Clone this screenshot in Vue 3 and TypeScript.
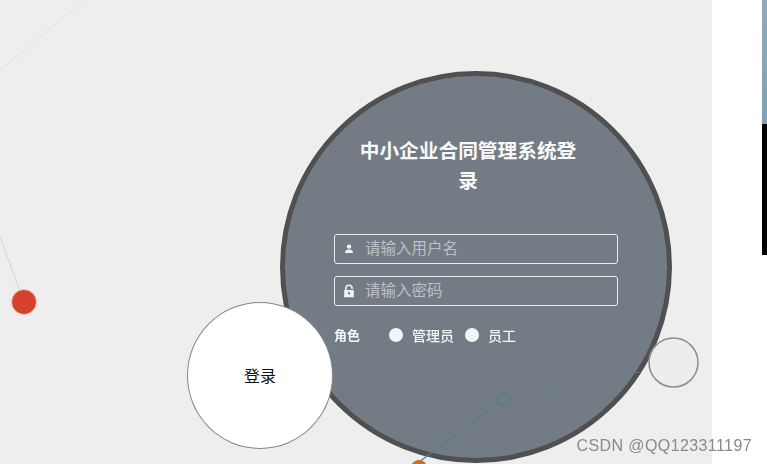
<script setup lang="ts">
import { ref } from 'vue'

const username = ref('')
const password = ref('')
const role = ref('')
const roles = ['管理员', '员工']
</script>

<template>
  <div class="page">
    <main class="stage">
      <svg class="threads" width="712" height="464" viewBox="0 0 712 464" aria-hidden="true">
        <line x1="0" y1="70" x2="85" y2="0" stroke="#e3e0df" stroke-width="1" />
        <line x1="0" y1="236" x2="20" y2="292" stroke="#e0cfcc" stroke-width="1" />
        <circle cx="24" cy="302" r="12.5" fill="#d5412d" stroke="#f3c9bf" stroke-width="1" />
      </svg>

      <section class="disc">
        <h1 class="title">中小企业合同管理系统登录</h1>
        <label class="field">
          <svg class="icon" width="14" height="14" viewBox="0 0 14 14" aria-hidden="true">
            <circle cx="7" cy="4.6" r="2.2" fill="#f2f4f5" />
            <path d="M3 11 C3 8.3 4.8 7.6 7 7.6 C9.2 7.6 11 8.3 11 11 Z" fill="#f2f4f5" />
          </svg>
          <input v-model="username" class="input" type="text" placeholder="请输入用户名" />
        </label>
        <label class="field">
          <svg class="icon" width="14" height="14" viewBox="0 0 14 14" aria-hidden="true">
            <path d="M3.900 6.500 V4.300 C3.900 2.500 5.300 1.300 7 1.300 C8.700 1.300 10.100 2.500 10.100 4.300 V4.900" fill="none" stroke="#f2f4f5" stroke-width="1.600" />
            <path fill-rule="evenodd" d="M2.200 6 H11.800 V13.200 H2.200 Z M7 8 A1.200 1.200 0 1 0 7 10.400 A1.200 1.200 0 1 0 7 8 Z" fill="#f2f4f5" />
          </svg>
          <input v-model="password" class="input" type="password" placeholder="请输入密码" />
        </label>
        <div class="roles">
          <span class="roles-label">角色</span>
          <label v-for="item in roles" :key="item" class="role">
            <input v-model="role" class="radio" type="radio" name="role" :value="item" />
            <span>{{ item }}</span>
          </label>
        </div>
      </section>

      <svg class="threads threads-top" width="712" height="464" viewBox="0 0 712 464" aria-hidden="true">
        <line x1="415" y1="465" x2="498" y2="403" stroke="#4f7f92" stroke-width="1.300" />
        <line x1="510" y1="398" x2="640" y2="372" stroke="#5f7a8a" stroke-width="1" />
        <circle cx="503.500" cy="399.500" r="6" fill="none" stroke="#4f7f92" stroke-width="1.500" />
        <circle cx="673.500" cy="362.500" r="24.500" fill="#eeeded" stroke="#8f8f8f" stroke-width="1.600" />
        <circle cx="419" cy="468" r="8" fill="#c8701f" />
      </svg>

      <button class="login" type="button">登录</button>
    </main>
    <div class="gutter">
      <div class="strip">
        <div class="strip-blue"></div>
        <div class="strip-black"></div>
      </div>
    </div>
    <span class="mark">CSDN @QQ123311197</span>
  </div>
</template>

<style scoped>
.page {
  position: relative;
  display: flex;
  width: 767px;
  height: 464px;
  overflow: hidden;
  background: #fff;
  font-family: "Noto Sans CJK SC", "Liberation Sans", sans-serif;
}
.stage {
  position: relative;
  flex: 0 0 712px;
  height: 464px;
  overflow: hidden;
  background: #eeeeee;
}
.threads {
  position: absolute;
  left: 0;
  top: 0;
  pointer-events: none;
}
.threads-top {
  z-index: 2;
}
.disc {
  position: absolute;
  left: 280px;
  top: 71px;
  box-sizing: border-box;
  width: 392px;
  height: 392px;
  padding: 59px 49px 0;
  display: flex;
  flex-direction: column;
  border: 5px solid #505050;
  border-radius: 50%;
  background: #737c85;
  color: #fff;
  filter: blur(0.3px);
}
.title {
  width: 234px;
  margin: 0 0 39px 17px;
  font-size: 19.700px;
  line-height: 30px;
  font-weight: 700;
  text-align: center;
  color: #f8f9fa;
}
.field {
  box-sizing: border-box;
  display: flex;
  align-items: center;
  width: 284px;
  height: 30px;
  margin-bottom: 12px;
  padding-left: 7px;
  border: 1.500px solid #e8ecef;
  border-radius: 3px;
}
.icon {
  flex: none;
}
.input {
  flex: 1;
  min-width: 0;
  margin-left: 9px;
  padding: 0 0 4px;
  border: 0;
  outline: 0;
  background: transparent;
  font: 400 15.500px "Noto Sans CJK SC", sans-serif;
  color: #fff;
}
.input::placeholder {
  color: #bcc1c7;
  opacity: 1;
}
.roles {
  display: flex;
  align-items: center;
  height: 26px;
  margin-top: 4px;
  font-size: 14px;
  font-weight: 500;
  color: #f4f6f7;
}
.roles-label {
  width: 55px;
  font-size: 13px;
  font-weight: 700;
  position: relative;
  top: -1px;
}
.role {
  display: flex;
  align-items: center;
  gap: 9px;
  margin-right: 11px;
}
.radio {
  appearance: none;
  width: 14px;
  height: 14px;
  margin: 0;
  border-radius: 50%;
  background: #eef7fb;
}
.login {
  position: absolute;
  left: 187px;
  top: 302px;
  z-index: 3;
  box-sizing: border-box;
  width: 146px;
  height: 147px;
  padding: 0 0 2px;
  border: 1px solid #868686;
  border-radius: 50%;
  background: #fff;
  font: 400 16px "Noto Sans CJK SC", sans-serif;
  color: #111;
}
.gutter {
  flex: 1;
  display: flex;
  justify-content: flex-end;
}
.strip {
  width: 5px;
  height: 255px;
  display: flex;
  flex-direction: column;
}
.strip-blue {
  height: 124px;
  background: linear-gradient(#8fabbb, #82a0b2);
}
.strip-black {
  flex: 1;
  background: #000;
}
.mark {
  position: absolute;
  right: 15px;
  top: 436px;
  z-index: 4;
  font: 400 16px/20px "Liberation Sans", sans-serif;
  letter-spacing: 0.4px;
  color: #8a8a8a;
}
</style>
